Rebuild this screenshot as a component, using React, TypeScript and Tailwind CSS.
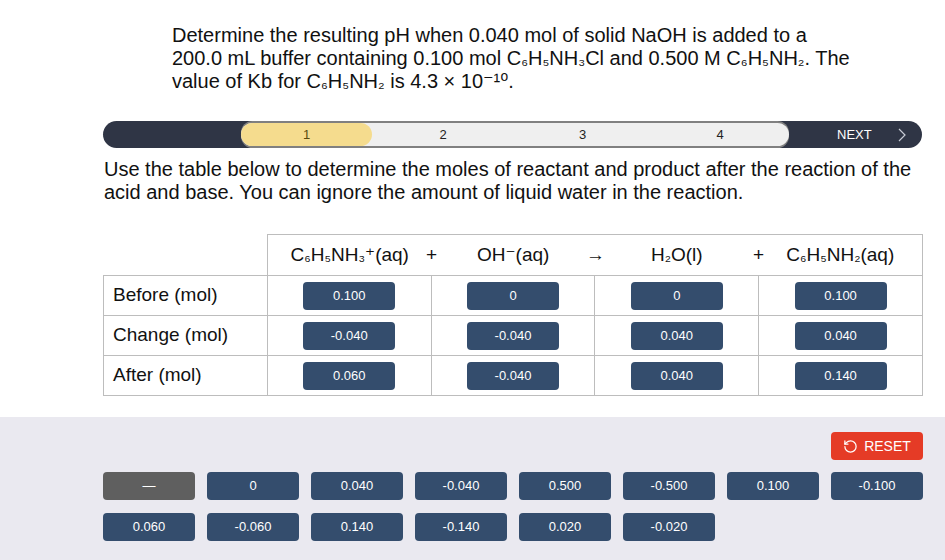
import { RotateCcw } from 'lucide-react';

const sans = { fontFamily: '"Liberation Sans", Arial, "DejaVu Sans", sans-serif' };

// unicode subscripts look a little smaller in the original
function Chem({ text }: { text: string }) {
  const parts = text.split(/([₀-₉]+)/);
  return (
    <>
      {parts.map((p, i) =>
        i % 2 === 1 ? (
          <span key={i} className="text-[0.85em] leading-none">{p}</span>
        ) : (
          <span key={i}>{p}</span>
        ),
      )}
    </>
  );
}

const rows = [
  { label: 'Before (mol)', values: ['0.100', '0', '0', '0.100'] },
  { label: 'Change (mol)', values: ['-0.040', '-0.040', '0.040', '0.040'] },
  { label: 'After (mol)', values: ['0.060', '-0.040', '0.040', '0.140'] },
];

const choices = [
  '—', '0', '0.040', '-0.040', '0.500', '-0.500', '0.100', '-0.100',
  '0.060', '-0.060', '0.140', '-0.140', '0.020', '-0.020',
];

function Chip({ value, gray }: { value: string; gray?: boolean }) {
  return (
    <div className={`flex h-[28px] w-[92px] items-center justify-center rounded-[4px] text-[13px] text-white ${gray ? 'bg-[#5f5f5f]' : 'bg-[#344d6d]'}`}>
      {value}
    </div>
  );
}

function Progress() {
  return (
    <div className="flex h-[27px] w-[819px] items-center rounded-full bg-[#2f3545]">
      <div className="w-[138px]" />
      <div className="flex h-[23px] w-[548px] items-center rounded-full bg-[#efefef] text-[13px] text-[#222] shadow-[0_-2px_0_#808080,0_2px_0_#808080]">
        <div className="flex h-full w-[131px] items-center justify-center rounded-full bg-[#f5dc8e] text-[#5a4a10]">1</div>
        <div className="w-[142px] text-center">2</div>
        <div className="w-[137px] text-center">3</div>
        <div className="w-[138px] text-center">4</div>
      </div>
      <div className="flex flex-1 items-center pl-[48px] text-[13px] text-white">
        <span>NEXT</span>
        <svg className="ml-[26px]" width="8" height="14" viewBox="0 0 8 14" fill="none" stroke="#c8ccd6" strokeWidth="1.2">
          <polyline points="1,1 7,7 1,13" />
        </svg>
      </div>
    </div>
  );
}

export default function App() {
  return (
    <div className="h-[560px] w-[945px] overflow-hidden bg-white text-[#111]" style={sans}>
      <div className="h-[417px]">
        <p className="ml-[172px] h-[93px] w-[680px] pt-[24px] text-[20px] leading-[23px]">
          <Chem text="Determine the resulting pH when 0.040 mol of solid NaOH is added to a 200.0 mL buffer containing 0.100 mol C₆H₅NH₃Cl and 0.500 M C₆H₅NH₂. The value of Kb for C₆H₅NH₂ is 4.3 × 10⁻¹⁰." />
        </p>

        <div className="ml-[103px] mt-[28px]">
          <Progress />
        </div>

        <p className="ml-[104px] mt-[10px] w-[820px] text-[20px] leading-[23px]">
          Use the table below to determine the moles of reactant and product after the reaction of the acid and base. You can ignore the amount of liquid water in the reaction.
        </p>

        <div className="ml-[103px] mt-[30px] w-[820px]">
          <div className="flex">
            <div className="w-[164px]" />
            <div className="flex h-[41px] w-[656px] items-center border border-b-0 border-[#bdbdbd] px-[9px] text-[19px]">
              <div className="w-[146px] text-center"><Chem text="C₆H₅NH₃⁺(aq)" /></div>
              <div className="w-[18px] text-center">+</div>
              <div className="w-[146px] text-center"><Chem text="OH⁻(aq)" /></div>
              <div className="w-[18px] text-center">→</div>
              <div className="w-[146px] text-center"><Chem text="H₂O(l)" /></div>
              <div className="w-[18px] text-center">+</div>
              <div className="w-[146px] text-center"><Chem text="C₆H₅NH₂(aq)" /></div>
            </div>
          </div>
          <div className="border-l border-t border-[#bdbdbd]">
            {rows.map((r) => (
              <div key={r.label} className="flex h-[40px] border-b border-[#bdbdbd]">
                <div className="flex w-[164px] items-center border-r border-[#bdbdbd] pl-[9px] text-[19px]">{r.label}</div>
                {r.values.map((v, i) => (
                  <div key={i} className="flex w-[164px] items-center justify-center border-r border-[#bdbdbd]">
                    <Chip value={v} />
                  </div>
                ))}
              </div>
            ))}
          </div>
        </div>
      </div>

      <div className="h-[143px] bg-[#eae9f0] pl-[103px] pt-[15px]">
        <div className="flex w-[820px] justify-end">
          <button className="flex h-[28px] w-[92px] items-center justify-center gap-[6px] rounded-[4px] bg-[#e53b26] text-[14px] text-white">
            <RotateCcw size={15} strokeWidth={2} />
            RESET
          </button>
        </div>
        <div className="mt-[12px] grid w-[820px] grid-cols-[repeat(8,92px)] gap-x-[12px] gap-y-[13px]">
          {choices.map((c, i) => (
            <Chip key={i} value={c} gray={i === 0} />
          ))}
        </div>
      </div>
    </div>
  );
}
